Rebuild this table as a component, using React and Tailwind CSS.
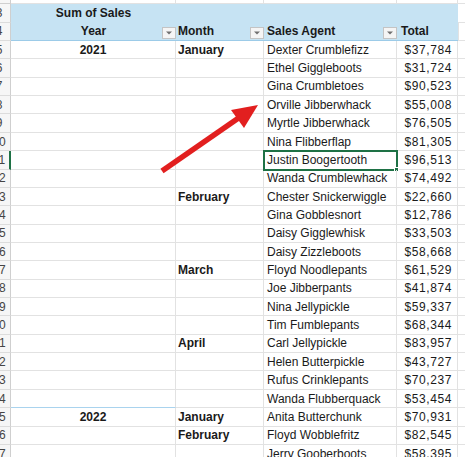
import React from "react";

const rows = [
  { n: 5, year: "2021", month: "January", agent: "Dexter Crumblefizz", total: "$37,784" },
  { n: 6, agent: "Ethel Giggleboots", total: "$31,724" },
  { n: 7, agent: "Gina Crumbletoes", total: "$90,523" },
  { n: 8, agent: "Orville Jibberwhack", total: "$55,008" },
  { n: 9, agent: "Myrtle Jibberwhack", total: "$76,505" },
  { n: 10, agent: "Nina Flibberflap", total: "$81,305" },
  { n: 11, agent: "Justin Boogertooth", total: "$96,513", selected: true },
  { n: 12, agent: "Wanda Crumblewhack", total: "$74,492" },
  { n: 13, month: "February", agent: "Chester Snickerwiggle", total: "$22,660" },
  { n: 14, agent: "Gina Gobblesnort", total: "$12,786" },
  { n: 15, agent: "Daisy Gigglewhisk", total: "$33,503" },
  { n: 16, agent: "Daisy Zizzleboots", total: "$58,668" },
  { n: 17, month: "March", agent: "Floyd Noodlepants", total: "$61,529" },
  { n: 18, agent: "Joe Jibberpants", total: "$41,874" },
  { n: 19, agent: "Nina Jellypickle", total: "$59,337" },
  { n: 20, agent: "Tim Fumblepants", total: "$68,344" },
  { n: 21, month: "April", agent: "Carl Jellypickle", total: "$83,957" },
  { n: 22, agent: "Helen Butterpickle", total: "$43,727" },
  { n: 23, agent: "Rufus Crinklepants", total: "$70,237" },
  { n: 24, agent: "Wanda Flubberquack", total: "$53,454", yearEnd: true },
  { n: 25, year: "2022", month: "January", agent: "Anita Butterchunk", total: "$70,931" },
  { n: 26, month: "February", agent: "Floyd Wobblefritz", total: "$82,545" },
  { n: 27, agent: "Jerry Gooberboots", total: "$58,395" },
];

const RowHead = ({ n, active }) => (
  <div
    className={`w-[11px] shrink-0 overflow-hidden border-b border-r border-b-[#dcdcdc] bg-[#f6f6f6] ${
      active ? "border-r-2 border-r-[#1e7145]" : "border-r-[#cfcfcf]"
    }`}
  >
    <div className="-ml-[14px] flex h-full w-[26px] items-center justify-center text-[12px] text-[#444]">
      {n}
    </div>
  </div>
);

const FilterButton = () => (
  <span className="mb-[1px] flex h-[12px] w-[14px] shrink-0 items-center justify-center self-end border border-[#c4c4c4] bg-[#f5f5f5]">
    <svg width="6" height="4" viewBox="0 0 6 4">
      <path d="M0 0.5h6L3 3.5z" fill="#707070" />
    </svg>
  </span>
);

export default function App() {
  return (
    <div className="relative h-[457px] w-[465px] overflow-hidden bg-white font-['Liberation_Sans',Arial,sans-serif] text-[12px] text-[#1a1a1a]">
      {/* row 2, cut off at top */}
      <div className="flex h-[4.3px]">
        <div className="w-[11px] border-b border-r border-[#cfcfcf] bg-[#f6f6f6]" />
        <div className="w-[165px] border-b border-r border-[#e2e2e2]" />
        <div className="w-[88px] border-b border-r border-[#e2e2e2]" />
        <div className="w-[133px] border-b border-r border-[#e2e2e2]" />
        <div className="w-[61px] border-b border-r border-[#e2e2e2]" />
        <div className="flex-1 border-b border-[#e2e2e2]" />
      </div>

      {/* pivot header */}
      <div className="flex h-[18.37px]">
        <RowHead n={3} />
        <div className="flex w-[447px] items-center bg-[#c6e3f3]">
          <div className="w-[165px] text-center font-bold">Sum of Sales</div>
        </div>
        <div className="flex-1 border-b border-[#e2e2e2]" />
      </div>
      <div className="flex h-[18.37px]">
        <RowHead n={4} />
        <div className="flex w-[447px] border-b border-[#9ccbe8] bg-[#c6e3f3] font-bold">
          <div className="flex w-[165px] items-center">
            <span className="w-[14px]" />
            <span className="flex-1 text-center">Year</span>
            <FilterButton />
          </div>
          <div className="flex w-[88px] items-center pl-[2px]">
            <span className="flex-1">Month</span>
            <FilterButton />
          </div>
          <div className="flex w-[133px] items-center pl-[3px]">
            <span className="flex-1">Sales Agent</span>
            <FilterButton />
          </div>
          <div className="flex w-[61px] items-center pl-[4px]">Total</div>
        </div>
        <div className="flex-1 border-b border-l border-[#e2e2e2]" />
      </div>

      {rows.map((r) => (
        <div key={r.n} className="flex h-[18.37px]">
          <RowHead n={r.n} active={r.selected} />
          <div
            className={`flex w-[165px] items-center justify-center border-b border-r border-r-[#e2e2e2] font-bold ${
              r.yearEnd ? "border-b-[#a9d3ee]" : "border-b-[#e2e2e2]"
            }`}
          >
            {r.year}
          </div>
          <div className="flex w-[88px] items-center border-b border-r border-[#e2e2e2] pl-[2px] font-bold">
            {r.month}
          </div>
          <div
            className={`relative flex w-[133px] items-center border-b border-r border-[#e2e2e2] pl-[3px] ${
              r.selected ? "outline-2 -outline-offset-1 outline-[#1e7145]" : ""
            }`}
          >
            {r.agent}
            {r.selected && (
              <span className="absolute -bottom-[3px] -right-[3px] h-[5px] w-[5px] border border-white bg-[#1e7145]" />
            )}
          </div>
          <div className="flex w-[61px] items-center justify-end border-b border-r border-[#e2e2e2] pr-[5px] tracking-[0.6px]">
            {r.total}
          </div>
          <div className="flex-1 border-b border-[#e2e2e2]" />
        </div>
      ))}

      {/* red annotation arrow */}
      <svg className="pointer-events-none absolute left-0 top-0" width="465" height="457">
        <line x1="162" y1="171" x2="240" y2="117" stroke="#e21f1f" strokeWidth="5.5" />
        <polygon points="258,105 231,110 244,128" fill="#e21f1f" />
      </svg>
    </div>
  );
}
